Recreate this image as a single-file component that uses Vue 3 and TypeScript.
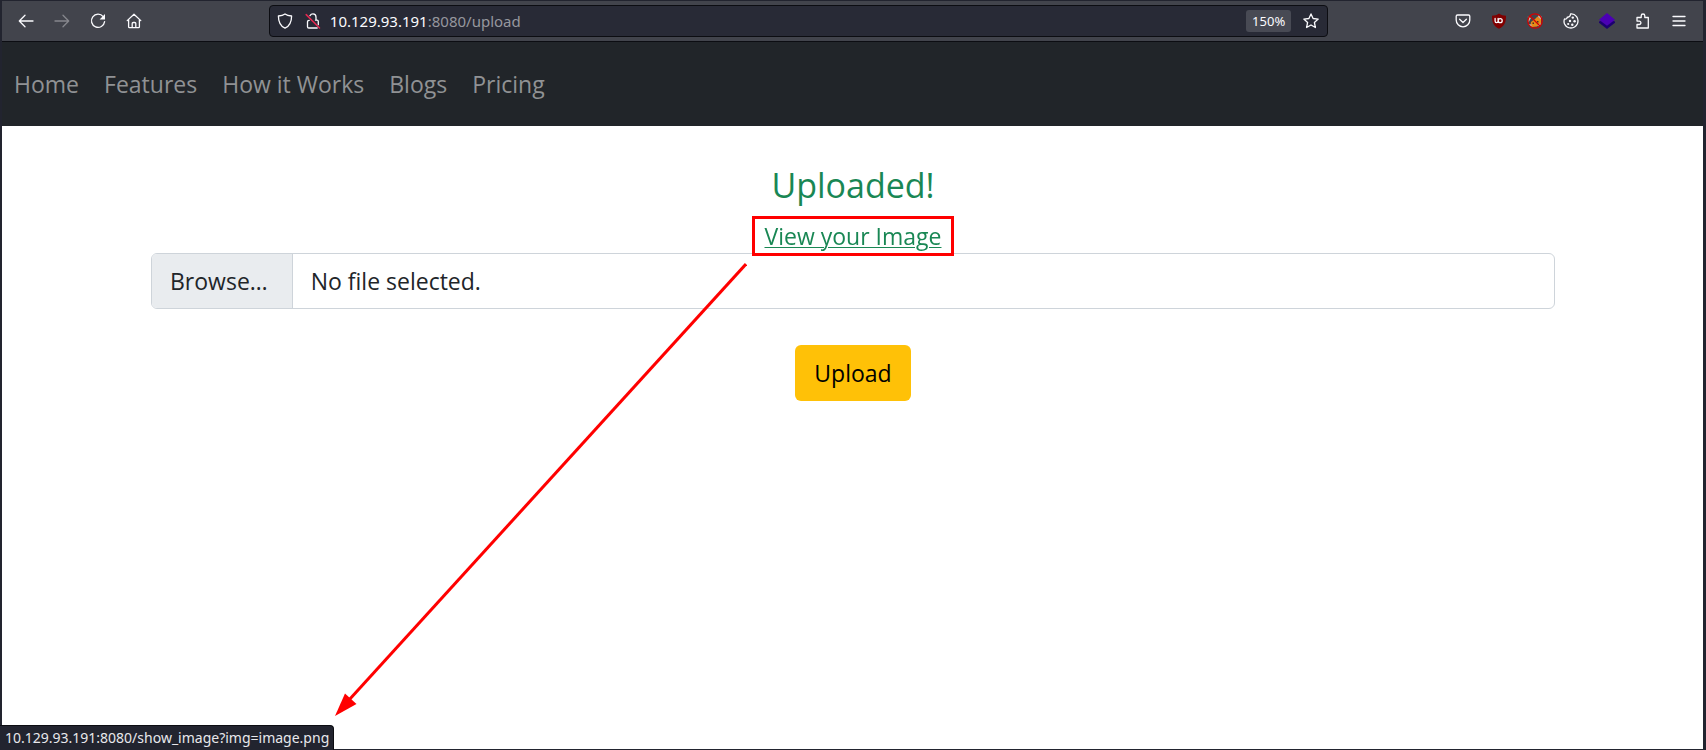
<script setup lang="ts">
import { ref } from 'vue'

const links: string[] = ['Home', 'Features', 'How it Works', 'Blogs', 'Pricing']
const target = '10.129.93.191:8080/show_image?img=image.png'
const fileName = ref('No file selected.')

function pick(event: Event): void {
  const files = (event.target as HTMLInputElement).files
  fileName.value = files && files.length ? files[0].name : 'No file selected.'
}
</script>

<template>
  <div class="window">
    <header class="toolbar">
      <div class="group nav-buttons">
        <button type="button" aria-label="Back">
          <svg viewBox="0 0 16 16"><path d="M15 8H1.5M7 2.2L1.3 8L7 13.8" /></svg>
        </button>
        <button type="button" aria-label="Forward" disabled>
          <svg viewBox="0 0 16 16"><path d="M1 8h13.5M9 2.2L14.7 8L9 13.8" /></svg>
        </button>
        <button type="button" aria-label="Reload">
          <svg viewBox="0 0 16 16"><path d="M13.2 3.6A6.6 6.6 0 1 0 14.6 8.6" /><path class="solid" d="M15 1v5.4H9.6z" /></svg>
        </button>
        <button type="button" aria-label="Home">
          <svg viewBox="0 0 16 16"><path d="M1.2 7.6L8 1.2l6.8 6.4M2.6 6.6v7.2q0 .9.9.9h9q.9 0 .9-.9V6.6M6.2 14.5v-4q0-1 1-1h1.6q1 0 1 1v4" /></svg>
        </button>
      </div>

      <div class="address">
        <svg viewBox="0 0 16 16"><path d="M8 .9C6 2.4 3.8 2.8 1.4 3C1.4 8.5 2.6 12.8 8 15.2C13.4 12.8 14.6 8.5 14.6 3C12.2 2.8 10 2.4 8 .9z" /></svg>
        <svg class="lock" viewBox="0 0 16 16"><path d="M5 2.6Q6 .8 8 .8q3 0 3 3.2v2.8M10.5 7.2h1.5q1.3 0 1.3 1.3v3.2M4.2 7.4q-1.7 0-1.7 1.6v4.7q0 1.3 1.3 1.3h8.4" /><path class="strike" d="M1.2 1.6L14.5 15" /></svg>
        <span class="url"><b>10.129.93.191</b>:8080/upload</span>
        <button type="button" class="zoom">150%</button>
        <button type="button" class="star" aria-label="Bookmark this page">
          <svg viewBox="0 0 16 16"><path d="M8 .9l2.1 4.6 5.1.6-3.8 3.4 1 5L8 12l-4.4 2.5 1-5L.8 6.1l5.1-.6z" /></svg>
        </button>
      </div>

      <div class="group extensions">
        <button type="button" aria-label="Save to Pocket">
          <svg viewBox="0 0 16 16"><path d="M2.5 2h11q1.300 0 1.300 1.300V7a6.800 6.800 0 0 1-13.600 0V3.300Q1.200 2 2.500 2zM4.600 6.300L8 9.500l3.400-3.200" /></svg>
        </button>
        <button type="button" aria-label="Content blocker">
          <svg viewBox="0 0 16 16"><path class="maroon" d="M8 .5C6 2 3.500 2.600 1 2.800C1 9.500 2.500 13.300 8 15.700C13.500 13.300 15 9.500 15 2.800C12.500 2.600 10 2 8 .5z" /><path d="M4.100 5.500v2.600q0 1.600 1.500 1.600t1.500-1.600V5.500M7.200 7.700a2 2 0 1 0 4 0a2 2 0 1 0-4 0" /></svg>
        </button>
        <button type="button" aria-label="Proxy switcher">
          <svg viewBox="0 0 16 16"><path class="orange" d="M3.500 12.500L4 9l4-3 2.500-2.500L14 6v4l-4 3.500-5 .5z" /><path class="pale" d="M.8 3.500L4 5 1.500 9.500zM11.500 1.500L15 4l-1 2.500L11 4zM1.500 11l3 .5V14zM10.500 12l4-2-2 4z" /><path class="dark" d="M5.500 9.500h1.500V11H5.500zM10 8h1.500v1.500H10z" /><circle class="ban" cx="8" cy="8" r="7.200" /><path class="ban" d="M3 3l10 10" /></svg>
        </button>
        <button type="button" aria-label="Cookie editor">
          <svg viewBox="0 0 16 16"><path d="M7.600 1Q11 .5 13.600 3.600Q16 7 14.300 11Q12 15 8 15Q3.500 15 1.600 11Q.5 8.500 1.500 6Q4 6.500 4.200 4.200Q7.200 4.500 7.600 1z" /><g class="dots"><circle cx="9.800" cy="4.600" r="1.200" /><circle cx="7" cy="8" r="1.200" /><circle cx="11.600" cy="8.200" r="1.200" /><circle cx="5.200" cy="11" r="1.100" /><circle cx="9.300" cy="11.800" r="1.200" /></g></svg>
        </button>
        <button type="button" aria-label="Layers">
          <svg viewBox="0 0 16 16"><path class="navy" d="M0 8.500l8-2 8 2v1.200L8 16 0 9.700z" /><path class="violet" d="M8 0l8 6.800-8 6-8-6z" /></svg>
        </button>
        <button type="button" aria-label="Extensions">
          <svg viewBox="0 0 16 16"><path d="M2 4.500h4.200V2.800a1.800 1.800 0 0 1 3.600 0v1.700h3.500V15H2v-3.500h2.200a1.700 1.700 0 0 0 0-3.400H2z" /></svg>
        </button>
        <button type="button" aria-label="Menu">
          <svg viewBox="0 0 16 16"><path d="M2 3.500h12M2 8h12M2 12.500h12" /></svg>
        </button>
      </div>
    </header>

    <nav class="site-nav">
      <a v-for="link in links" :key="link" href="#">{{ link }}</a>
    </nav>

    <main>
      <h1>Uploaded!</h1>
      <div class="highlight"><a href="#">View your Image</a></div>
      <form @submit.prevent>
        <label class="file">
          <input type="file" @change="pick" />
          <span class="browse">Browse…</span>
          <span class="name">{{ fileName }}</span>
        </label>
        <button type="submit" class="upload">Upload</button>
      </form>
    </main>

    <svg class="arrow" viewBox="0 0 412 454" aria-hidden="true">
      <path class="shaft" d="M411 1L14 437" />
      <path class="head" d="M0 453L10 430.500L21.500 441z" />
    </svg>
    <div class="status">{{ target }}</div>
  </div>
</template>

<style>
body {
  margin: 0;
}
</style>

<style scoped>
.window {
  box-sizing: border-box;
  position: relative;
  display: flex;
  flex-direction: column;
  min-height: 100vh;
  border: solid #22242f;
  border-width: 1px 3px 1px 2px;
  background: #fff;
  color: #212529;
  font-family: "Open Sans", "Noto Sans", sans-serif;
  font-size: 23px;
  line-height: 36px;
}

button {
  font: inherit;
  border: 0;
  padding: 0;
  cursor: pointer;
}

.toolbar {
  display: grid;
  grid-template-columns: 251fr 1060fr 359fr;
  align-items: center;
  height: 40px;
  padding: 0 16px;
  background: #42444c;
  border-bottom: 1px solid #0c0d12;
  color: #fbfbfe;
  font-family: "Noto Sans", sans-serif;
}

.toolbar svg {
  display: block;
  width: 16px;
  height: 16px;
  fill: none;
  stroke: currentColor;
  stroke-width: 1.3;
  stroke-linecap: round;
  stroke-linejoin: round;
}

.toolbar button {
  background: none;
  color: inherit;
}

.toolbar button:disabled {
  color: #86878d;
}

.group {
  display: flex;
  gap: 20px;
}

.extensions {
  justify-content: flex-end;
}

.toolbar .solid,
.toolbar .dots {
  fill: currentColor;
  stroke: none;
}

.toolbar .strike {
  stroke: #e22850;
  stroke-width: 1.5;
}

.toolbar .maroon {
  fill: #800000;
  stroke: none;
}

.toolbar .orange {
  fill: #e68a17;
  stroke: none;
}

.toolbar .pale {
  fill: #c8b8a8;
  stroke: none;
}

.toolbar .dark {
  fill: #4a3020;
  stroke: none;
}

.toolbar .ban {
  stroke: #d40000;
}

.toolbar .navy {
  fill: #1c0070;
  stroke: none;
}

.toolbar .violet {
  fill: #4b00b4;
  stroke: none;
}

.address {
  box-sizing: border-box;
  display: flex;
  align-items: center;
  height: 32px;
  padding: 0 8px 0 7px;
  background: #282a36;
  border: 1px solid #0c0d12;
  border-radius: 4px;
  font-size: 15px;
  line-height: 20px;
}

.address .lock {
  margin: 0 9px 0 12px;
}

.url {
  flex: 1;
  color: #96979e;
}

.url b {
  font-weight: 400;
  color: #fbfbfe;
}

.toolbar .zoom {
  height: 22px;
  padding: 0 6px;
  border-radius: 3px;
  background: #484a54;
  font-size: 13px;
  line-height: 22px;
}

.star {
  margin-left: 12px;
}

.site-nav {
  display: flex;
  gap: 25px;
  padding: 24px 12px;
  background: #212529;
}

.site-nav a {
  color: #909294;
  text-decoration: none;
}

main {
  flex: 1;
  display: flex;
  flex-direction: column;
  align-items: center;
  padding: 36px 148px 36px 149px;
}

h1 {
  margin: 0 0 8px;
  color: #198754;
  font-size: 34px;
  font-weight: 400;
  line-height: 46px;
}

.highlight {
  position: relative;
  z-index: 1;
  padding: 0 10px;
  border: 3px solid #f00;
  line-height: 34px;
}

.highlight a {
  color: #198754;
  text-decoration-thickness: 1px;
  text-underline-offset: 2px;
}

form {
  align-self: stretch;
  display: flex;
  flex-direction: column;
  align-items: center;
  gap: 36px;
  margin-top: -3px;
}

.file {
  box-sizing: border-box;
  position: relative;
  display: flex;
  width: 100%;
  border: 1px solid #ced4da;
  border-radius: 6px;
  overflow: hidden;
}

.file input {
  position: absolute;
  inset: 0;
  width: 100%;
  opacity: 0;
}

.browse {
  padding: 9px 24px 9px 18px;
  background: #e9ecef;
  border-right: 1px solid #ced4da;
}

.name {
  padding: 9px 18px;
}

.upload {
  padding: 10px 19px;
  border-radius: 6px;
  background: #ffc107;
  color: #000;
}

.arrow {
  position: absolute;
  left: 333px;
  bottom: 32px;
  width: 412px;
  height: 454px;
}

.shaft {
  fill: none;
  stroke: #f00;
  stroke-width: 3;
}

.head {
  fill: #f00;
}

.status {
  position: absolute;
  left: -2px;
  bottom: -1px;
  padding: 2px 4px 2px 5px;
  background: #22242f;
  border-top: 1px solid #0c0d12;
  border-right: 1px solid #0c0d12;
  border-radius: 0 4px 0 0;
  color: #e8e8ec;
  font-family: "Noto Sans", sans-serif;
  font-size: 14px;
  line-height: 20px;
}
</style>
